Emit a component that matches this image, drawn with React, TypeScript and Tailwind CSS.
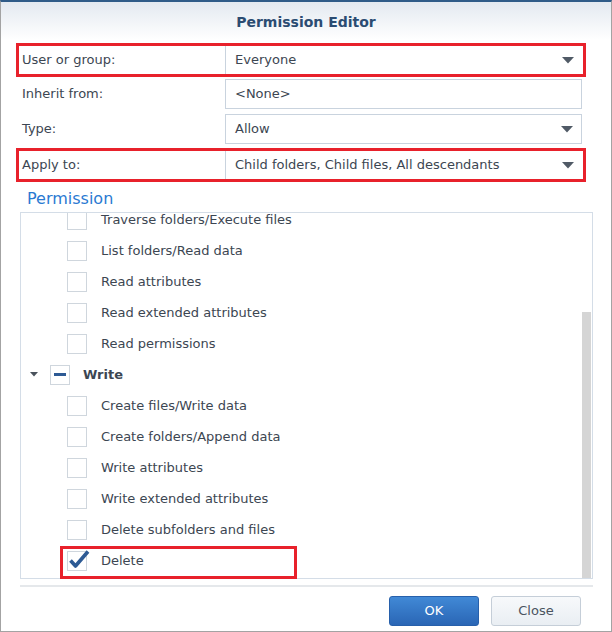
import { ReactNode } from "react";

const font = { fontFamily: '"DejaVu Sans", Verdana, sans-serif' };

function Caret() {
  return (
    <svg width="12" height="7" viewBox="0 0 12 7" className="shrink-0">
      <path d="M0 0H12L6 6.5Z" fill="#505a66" />
    </svg>
  );
}

function Field({ value, dropdown, boxed }: { value: string; dropdown?: boolean; boxed?: boolean }) {
  return (
    <div
      className={
        "flex w-[357px] items-center justify-between bg-white pl-[9px] pr-[8px] " +
        (boxed ? "h-[28px] border-l border-[#c9d3de]" : "h-[30px] border border-[#c9d3de]")
      }
    >
      <span className="text-[13px] text-[#3c4652]">{value}</span>
      {dropdown && <Caret />}
    </div>
  );
}

function FormRow({ label, value, dropdown, boxed }: { label: string; value: string; dropdown?: boolean; boxed?: boolean }) {
  if (boxed) {
    return (
      <div className="ml-[15px] flex h-[34px] w-[570px] items-center border-[3px] border-[#e8212b] pl-[3px]">
        <span className="w-[203px] text-[13px] text-[#3c4652]">{label}</span>
        <Field value={value} dropdown={dropdown} boxed />
      </div>
    );
  }
  return (
    <div className="ml-[21px] flex h-[30px] items-center">
      <span className="w-[203px] text-[13px] text-[#3c4652]">{label}</span>
      <Field value={value} dropdown={dropdown} />
    </div>
  );
}

function Box({ children }: { children?: ReactNode }) {
  return (
    <div className="relative flex h-[20px] w-[20px] shrink-0 items-center justify-center border border-[#cfd6dd] bg-white">
      {children}
    </div>
  );
}

function Check() {
  return (
    <svg width="24" height="20" viewBox="0 0 24 20" className="absolute left-[0px] top-[-3px]">
      <path d="M2.5 11.5L7.5 17L20 2.5" fill="none" stroke="#2d5a94" strokeWidth="3.6" strokeLinejoin="round" />
    </svg>
  );
}

const readItems = [
  "Traverse folders/Execute files",
  "List folders/Read data",
  "Read attributes",
  "Read extended attributes",
  "Read permissions",
];

const writeItems = [
  "Create files/Write data",
  "Create folders/Append data",
  "Write attributes",
  "Write extended attributes",
  "Delete subfolders and files",
];

function ChildRow({ label, checked }: { label: string; checked?: boolean }) {
  return (
    <div className="flex h-[31px] items-center pl-[46px]">
      <Box>{checked && <Check />}</Box>
      <span className="ml-[14px] text-[13px] text-[#3c4652]">{label}</span>
    </div>
  );
}

export default function App() {
  return (
    <div
      style={font}
      className="relative h-[632px] w-[612px] overflow-hidden border-x border-b border-t-2 border-x-[#a3a3a3] border-b-[#a3a3a3] border-t-[#2f5b88] bg-white"
    >
      <div className="flex h-[38px] items-center justify-center bg-gradient-to-b from-[#e3e9f0] to-white">
        <h1 className="pt-[2px] text-[14px] font-bold text-[#2b4c72]">Permission Editor</h1>
      </div>

      <div className="mt-[3px]">
        <FormRow label="User or group:" value="Everyone" dropdown boxed />
        <div className="mt-[2px]">
          <FormRow label="Inherit from:" value="<None>" />
        </div>
        <div className="mt-[5px]">
          <FormRow label="Type:" value="Allow" dropdown />
        </div>
        <div className="mt-[4px]">
          <FormRow label="Apply to:" value="Child folders, Child files, All descendants" dropdown boxed />
        </div>
      </div>

      <div className="ml-[26px] mt-[6px] h-[24px] text-[16px] leading-[22px] text-[#2a7ad2]">Permission</div>

      <div className="relative ml-[19px] w-[573px]">
        <div className="relative h-[367px] overflow-hidden border border-[#d4dde7] bg-white">
          <div className="mt-[-9px]">
            {readItems.map((item) => (
              <ChildRow key={item} label={item} />
            ))}
            <div className="flex h-[31px] items-center pl-[9px]">
              <svg width="8" height="5" viewBox="0 0 8 5" className="shrink-0">
                <path d="M0 0H8L4 4.5Z" fill="#4a525c" />
              </svg>
              <div className="ml-[12px]">
                <Box>
                  <div className="h-[3px] w-[12px] bg-[#2d5a94]" />
                </Box>
              </div>
              <span className="ml-[13px] text-[13px] font-bold text-[#3c4652]">Write</span>
            </div>
            {writeItems.map((item) => (
              <ChildRow key={item} label={item} />
            ))}
            <ChildRow label="Delete" checked />
          </div>
          <div className="absolute bottom-0 right-[1px] h-[266px] w-[9px] bg-[#d5d5d5]" />
        </div>
        <div className="absolute left-[40px] top-[334px] h-[33px] w-[237px] border-[3px] border-[#e8212b]" />
      </div>

      <div className="ml-[19px] mt-[6px] h-[2px] w-[573px] bg-[#e5e8eb]" />

      <div className="mr-[30px] mt-[9px] flex justify-end gap-[12px]">
        <button className="h-[30px] w-[90px] rounded-[3px] border border-[#2760ab] bg-gradient-to-b from-[#4189d6] to-[#2a66b5] text-[13px] text-white">
          OK
        </button>
        <button className="h-[30px] w-[90px] rounded-[3px] border border-[#c5ced8] bg-gradient-to-b from-[#f7f9fb] to-[#e9eef3] text-[13px] text-[#4a5460]">
          Close
        </button>
      </div>
    </div>
  );
}
